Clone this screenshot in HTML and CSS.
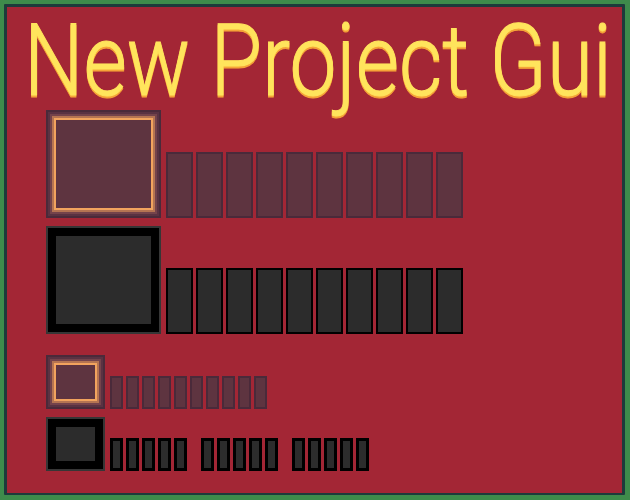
FILE: index.html
```html
<!DOCTYPE html>
<html>
<head>
<meta charset="utf-8">
<link rel="stylesheet" href="styles.css">
</head>
<body>
<div class="screen">
  <div class="panel">
    <div class="title-wrap">
      <svg class="title-svg" width="596" height="103" viewBox="0 0 724 103" preserveAspectRatio="none">
        <text class="title" x="0" y="88" textLength="714" lengthAdjust="spacingAndGlyphs">New Project Gui</text>
      </svg>
    </div>

    <div class="row row-first">
      <div class="slot-big slot-warm"></div>
      <div class="cells">
        <div class="cell cell-warm"></div><div class="cell cell-warm"></div><div class="cell cell-warm"></div><div class="cell cell-warm"></div><div class="cell cell-warm"></div>
        <div class="cell cell-warm"></div><div class="cell cell-warm"></div><div class="cell cell-warm"></div><div class="cell cell-warm"></div><div class="cell cell-warm"></div>
      </div>
    </div>

    <div class="row row-near">
      <div class="slot-big slot-dark"></div>
      <div class="cells">
        <div class="cell cell-dark"></div><div class="cell cell-dark"></div><div class="cell cell-dark"></div><div class="cell cell-dark"></div><div class="cell cell-dark"></div>
        <div class="cell cell-dark"></div><div class="cell cell-dark"></div><div class="cell cell-dark"></div><div class="cell cell-dark"></div><div class="cell cell-dark"></div>
      </div>
    </div>

    <div class="row row-far">
      <div class="slot-small slot-warm"></div>
      <div class="minis">
        <div class="mini mini-warm"></div><div class="mini mini-warm"></div><div class="mini mini-warm"></div><div class="mini mini-warm"></div><div class="mini mini-warm"></div>
        <div class="mini mini-warm"></div><div class="mini mini-warm"></div><div class="mini mini-warm"></div><div class="mini mini-warm"></div><div class="mini mini-warm"></div>
      </div>
    </div>

    <div class="row row-near">
      <div class="slot-small slot-dark"></div>
      <div class="groups">
        <div class="minis">
          <div class="mini mini-dark"></div><div class="mini mini-dark"></div><div class="mini mini-dark"></div><div class="mini mini-dark"></div><div class="mini mini-dark"></div>
        </div>
        <div class="minis">
          <div class="mini mini-dark"></div><div class="mini mini-dark"></div><div class="mini mini-dark"></div><div class="mini mini-dark"></div><div class="mini mini-dark"></div>
        </div>
        <div class="minis">
          <div class="mini mini-dark"></div><div class="mini mini-dark"></div><div class="mini mini-dark"></div><div class="mini mini-dark"></div><div class="mini mini-dark"></div>
        </div>
      </div>
    </div>
  </div>
</div>
</body>
</html>
```

FILE: styles.css
```css
* { box-sizing: border-box; }

html, body {
  margin: 0;
  padding: 0;
  background: #3e8b4b;
}

.screen {
  width: 630px;
  height: 500px;
  padding: 4px 5px 5px 4px;
  background: #3e8b4b;
}

.panel {
  width: 621px;
  height: 491px;
  background: #a32635;
  border-style: solid;
  border-color: #1d3b3b;
  border-width: 3px 3px 2px 3px;
  border-radius: 1px;
  padding-left: 39px;
}

.title-wrap {
  height: 103px;
  margin-left: -22px;
}

.title-svg {
  display: block;
  overflow: visible;
}

.title {
  font-family: Roboto, "Liberation Sans", sans-serif;
  font-weight: 300;
  font-size: 100px;
  fill: #ffe45c;
  stroke: #ffe45c;
  stroke-width: 1px;
  filter: drop-shadow(0 2px 0 #f6a437);
}

.row {
  display: flex;
  align-items: flex-end;
  gap: 5px;
}

.row-near { margin-top: 8px; }
.row-far { margin-top: 21px; }

.slot-big {
  width: 115px;
  height: 108px;
}

.slot-small {
  width: 59px;
  height: 54px;
}

.slot-warm {
  background: #5e3440;
  border: 2px solid #4a2a3a;
  box-shadow:
    inset 0 0 0 2px #5a3242,
    inset 0 0 0 4px #74434b,
    inset 0 0 0 6px #b57452,
    inset 0 0 0 8px #f2a35e;
}

.slot-dark {
  background: #2c2c2c;
  border: 2px solid #363636;
  box-shadow: inset 0 0 0 8px #000000;
}

.cells {
  display: flex;
  gap: 3px;
}

.cell {
  width: 27px;
  height: 66px;
  border: 2px solid;
}

.cell-warm {
  background: #5e3440;
  border-color: #4a2a3a;
}

.cell-dark {
  background: #2c2c2c;
  border-color: #000000;
}

.minis {
  display: flex;
  gap: 3px;
}

.groups {
  display: flex;
  gap: 14px;
}

.mini {
  width: 13px;
  height: 33px;
  border: 2px solid;
}

.mini-warm {
  background: #5e3440;
  border-color: #4a2a3a;
}

.mini-dark {
  background: #2c2c2c;
  border-color: #000000;
  border-width: 3px;
}
```
